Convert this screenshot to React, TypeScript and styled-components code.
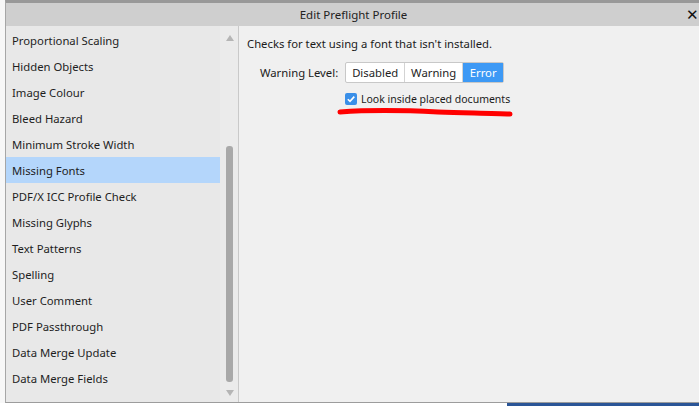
import React from "react";
import styled, { createGlobalStyle } from "styled-components";

const Global = createGlobalStyle`
  html, body { margin: 0; padding: 0; background: #f7f7f7; }
  body { font-family: "Segoe UI", "Noto Sans", "Open Sans", sans-serif; font-size: 11.3px; color: #1b1b1b; overflow: hidden; }
`;

const Page = styled.div`
  width: 699px;
  height: 406px;
  display: flex;
  flex-direction: column;
  overflow: hidden;
`;

const Window = styled.div`
  margin-left: 5px;
  height: 399px;
  border-top: 3px solid #999999;
  border-left: 1px solid #a6a6a6;
  border-bottom: 1px solid #9c9c9c;
  display: flex;
  flex-direction: column;
  background: #f0f0f0;
`;

const TitleBar = styled.div`
  height: 23px;
  background: #cfcfcf;
  position: relative;
  display: flex;
  align-items: center;
  justify-content: center;
  font-size: 11.5px;
  color: #222;
  padding-left: 2px;
`;

const Close = styled.span`
  position: absolute;
  right: 0px;
  top: 3px;
  font-size: 15px;
  color: #111;
  line-height: 16px;
`;

const Body = styled.div`
  flex: 1;
  display: flex;
  min-height: 0;
`;

const Sidebar = styled.div`
  width: 232px;
  display: flex;
  border-right: 1px solid #c9c9c9;
  background: #e8e8e8;
`;

const List = styled.div`
  flex: 1;
  padding-top: 1px;
  display: flex;
  flex-direction: column;
`;

const Item = styled.div<{ $selected?: boolean }>`
  height: 26px;
  display: flex;
  align-items: center;
  padding-left: 6px;
  font-size: 11.3px;
  color: #1e1e1e;
  background: ${(p) => (p.$selected ? "#b4d6fb" : "transparent")};
`;

const ScrollBar = styled.div`
  width: 18px;
  background: #ebebeb;
  position: relative;
`;

const Thumb = styled.div`
  position: absolute;
  left: 6px;
  width: 7px;
  top: 120px;
  bottom: 20px;
  border-radius: 3px;
  background: #a9a9a9;
`;

const Arrow = styled.div<{ $down?: boolean }>`
  position: absolute;
  left: 6px;
  width: 0;
  height: 0;
  border-left: 4px solid transparent;
  border-right: 4px solid transparent;
  ${(p) =>
    p.$down
      ? "bottom: 6px; border-top: 6px solid #b5b5b5;"
      : "top: 9px; border-bottom: 6px solid #b5b5b5;"}
`;

const Main = styled.div`
  flex: 1;
  padding: 9px 0 0 8px;
  display: flex;
  flex-direction: column;
`;

const Description = styled.div`
  font-size: 11.3px;
  height: 18px;
  line-height: 18px;
`;

const Row = styled.div`
  display: flex;
  align-items: center;
  margin-top: 9px;
  padding-left: 13px;
  gap: 7px;
`;

const Label = styled.span<{ $size?: number }>`
  font-size: ${(p) => p.$size ?? 11.3}px;
`;

const Segmented = styled.div`
  display: flex;
  border: 1px solid #c8c8c8;
  border-radius: 2px;
  background: #ffffff;
  height: 19px;
`;

const Segment = styled.div<{ $active?: boolean; $w: number }>`
  width: ${(p) => p.$w}px;
  display: flex;
  align-items: center;
  justify-content: center;
  font-size: 11.3px;
  color: ${(p) => (p.$active ? "#ffffff" : "#1e1e1e")};
  background: ${(p) => (p.$active ? "#3d99f5" : "transparent")};
  & + & {
    border-left: 1px solid #d3d3d3;
  }
`;

const CheckRow = styled.div`
  display: flex;
  align-items: center;
  gap: 4px;
  margin-top: 9px;
  padding-left: 98px;
  position: relative;
`;

const Box = styled.span`
  width: 12px;
  height: 12px;
  border-radius: 2px;
  background: #3a8fe8;
  display: inline-flex;
  align-items: center;
  justify-content: center;
`;

const Scribble = styled.svg`
  position: absolute;
  left: 91px;
  top: 17px;
  overflow: visible;
`;

const Footer = styled.div`
  height: 3px;
  display: flex;
  background: #ffffff;
  padding-left: 507px;
`;

const Logo = styled.div`
  flex: 1;
  background: #2a5597;
`;

const items = [
  "Proportional Scaling",
  "Hidden Objects",
  "Image Colour",
  "Bleed Hazard",
  "Minimum Stroke Width",
  "Missing Fonts",
  "PDF/X ICC Profile Check",
  "Missing Glyphs",
  "Text Patterns",
  "Spelling",
  "User Comment",
  "PDF Passthrough",
  "Data Merge Update",
  "Data Merge Fields",
];

export default function App() {
  return (
    <Page>
      <Global />
      <Window>
        <TitleBar>
          Edit Preflight Profile
          <Close>✕</Close>
        </TitleBar>
        <Body>
          <Sidebar>
            <List>
              {items.map((t) => (
                <Item key={t} $selected={t === "Missing Fonts"}>
                  {t}
                </Item>
              ))}
            </List>
            <ScrollBar>
              <Arrow />
              <Thumb />
              <Arrow $down />
            </ScrollBar>
          </Sidebar>
          <Main>
            <Description>Checks for text using a font that isn't installed.</Description>
            <Row>
              <Label>Warning Level:</Label>
              <Segmented>
                <Segment $w={58}>Disabled</Segment>
                <Segment $w={57}>Warning</Segment>
                <Segment $w={40} $active>
                  Error
                </Segment>
              </Segmented>
            </Row>
            <CheckRow>
              <Box>
                <svg width="10" height="10" viewBox="0 0 10 10">
                  <path d="M1.8 5.2 L4 7.4 L8.3 2.6" fill="none" stroke="#fff" strokeWidth="1.6" />
                </svg>
              </Box>
              <Label $size={10.5}>Look inside placed documents</Label>
              <Scribble width="176" height="8" viewBox="0 0 176 8">
                <path
                  d="M2 3 C 30 1, 60 1, 100 3 C 130 4, 155 4, 172 5"
                  fill="none"
                  stroke="#ff0000"
                  strokeWidth="5"
                  strokeLinecap="round"
                />
              </Scribble>
            </CheckRow>
          </Main>
        </Body>
      </Window>
      <Footer>
        <Logo />
      </Footer>
    </Page>
  );
}
